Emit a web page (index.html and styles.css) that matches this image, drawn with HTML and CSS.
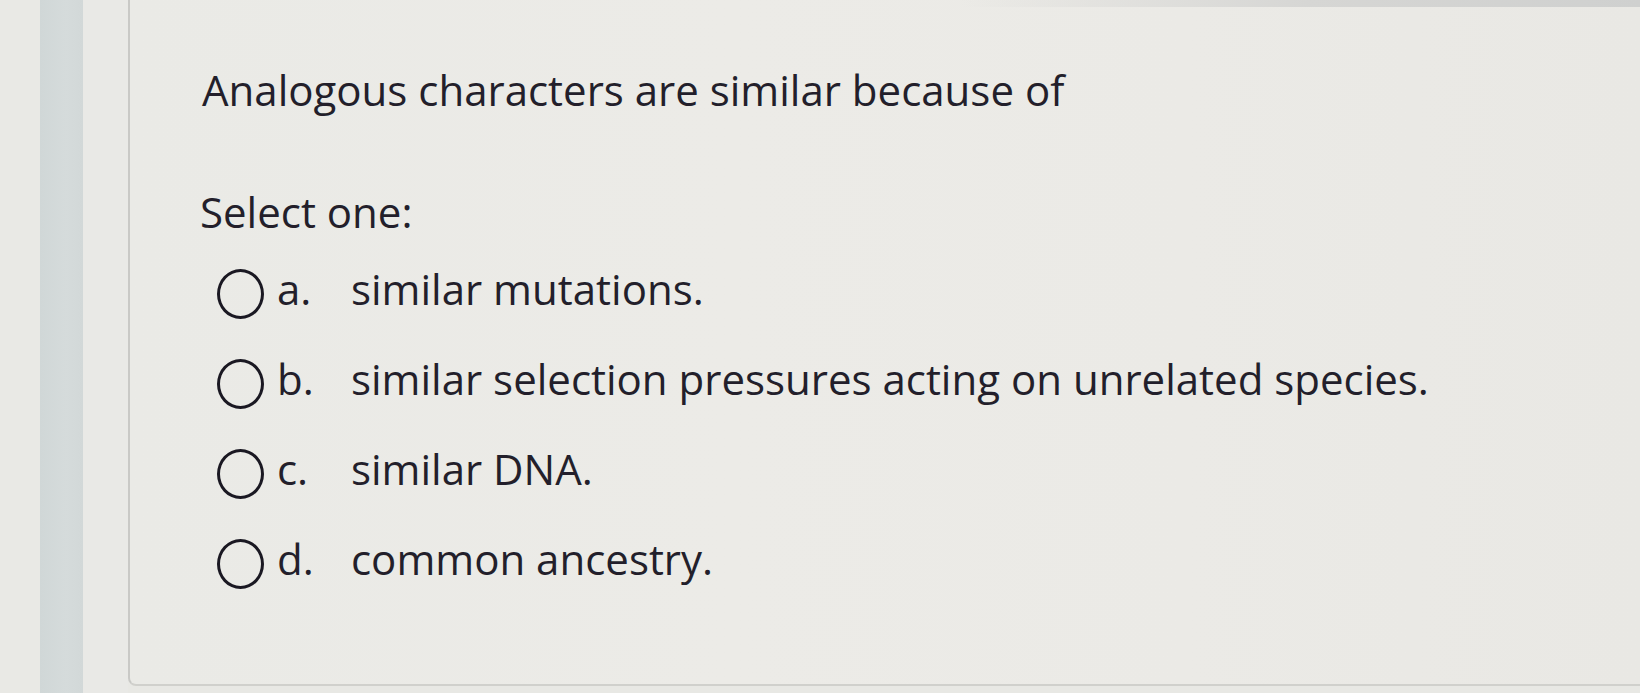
FILE: index.html
```html
<!DOCTYPE html>
<html lang="en">
<head>
<meta charset="utf-8">
<title>Quiz question</title>
<link rel="stylesheet" href="styles.css">
</head>
<body>
<div class="page">
  <div class="gutter"></div>
  <div class="strip"></div>
  <div class="gap"></div>
  <main class="card">
    <div class="topband"></div>
    <div class="content">
      <h1 class="question">Analogous characters are similar because of</h1>
      <p class="prompt">Select one:</p>
      <ul class="answers">
        <li class="answer"><span class="radio"></span><span class="letter">a.</span><span class="text">similar mutations.</span></li>
        <li class="answer"><span class="radio"></span><span class="letter">b.</span><span class="text">similar selection pressures acting on unrelated species.</span></li>
        <li class="answer"><span class="radio"></span><span class="letter">c.</span><span class="text">similar DNA.</span></li>
        <li class="answer"><span class="radio"></span><span class="letter">d.</span><span class="text">common ancestry.</span></li>
      </ul>
    </div>
  </main>
</div>
</body>
</html>
```

FILE: styles.css
```css
* { box-sizing: border-box; }
html, body {
  margin: 0;
  padding: 0;
  width: 1640px;
  height: 693px;
  overflow: hidden;
  background: #e8e8e4;
  font-family: "Open Sans", "Noto Sans", sans-serif;
  color: #231f2b;
}
.page {
  display: flex;
  height: 693px;
}
.gutter {
  width: 40px;
  flex: none;
  background: #e9e9e5;
}
.strip {
  width: 43px;
  flex: none;
  background: linear-gradient(90deg, #d0d7d7, #d5dbdb 60%, #d2d8d8);
}
.gap {
  width: 45px;
  flex: none;
  background: #e9e9e6;
}
.card {
  flex: 1;
  height: 686px;
  border-left: 2px solid #c9c9c6;
  border-bottom: 2px solid #d0d0cc;
  border-bottom-left-radius: 8px;
  background: linear-gradient(90deg, #eaeae6 0%, #ecebe7 40%, #ebeae6 70%, #e9e8e4 100%);
  display: flex;
  flex-direction: column;
}
.topband {
  height: 7px;
  flex: none;
  background: linear-gradient(90deg, rgba(210,210,208,0) 0%, rgba(210,210,208,0) 55%, #d6d6d4 78%, #cfd0cf 100%);
}
.content {
  padding: 55px 0 0 72px;
}
.question {
  margin: 0;
  font-size: 42px;
  font-weight: 400;
  line-height: 56px;
}
.prompt {
  margin: 66px 0 0 -2px;
  font-size: 42px;
  line-height: 56px;
}
.answers {
  list-style: none;
  margin: 21px 0 0 0;
  padding: 0;
  display: flex;
  flex-direction: column;
  gap: 34px;
}
.answer {
  display: flex;
  align-items: center;
  height: 56px;
  font-size: 42px;
  line-height: 56px;
}
.radio {
  width: 47px;
  height: 50px;
  flex: none;
  border: 3.5px solid #1a1822;
  border-radius: 50%;
  margin: 10px 0 0 15px;
}
.letter {
  width: 74px;
  flex: none;
  margin-left: 13px;
}
.text {
  white-space: nowrap;
}
```
